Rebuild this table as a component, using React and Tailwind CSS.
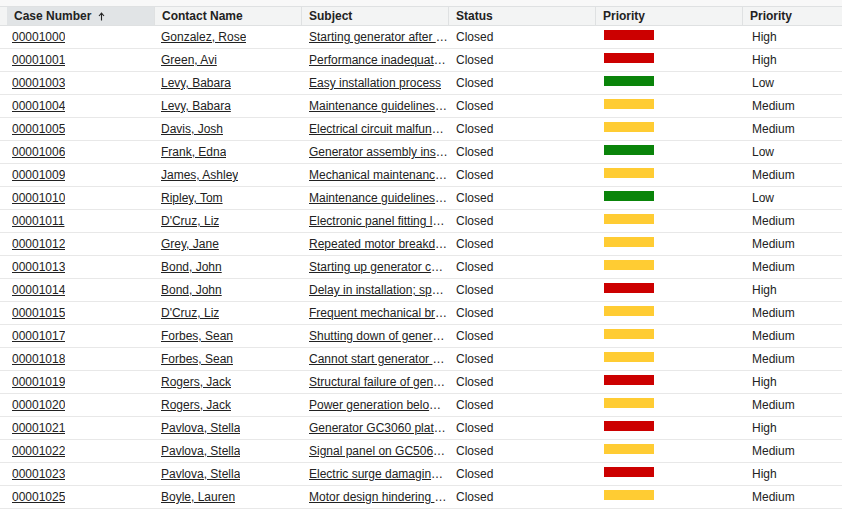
import React from "react";

const rows = [
  ["00001000", "Gonzalez, Rose", "Starting generator after electrical failure", "High"],
  ["00001001", "Green, Avi", "Performance inadequate for second consecutive week", "High"],
  ["00001003", "Levy, Babara", "Easy installation process", "Low"],
  ["00001004", "Levy, Babara", "Maintenance guidelines for generator unclear", "Medium"],
  ["00001005", "Davis, Josh", "Electrical circuit malfunctioning", "Medium"],
  ["00001006", "Frank, Edna", "Generator assembly instructions unclear", "Low"],
  ["00001009", "James, Ashley", "Mechanical maintenance schedule missing", "Medium"],
  ["00001010", "Ripley, Tom", "Maintenance guidelines for generator unclear", "Low"],
  ["00001011", "D'Cruz, Liz", "Electronic panel fitting loose", "Medium"],
  ["00001012", "Grey, Jane", "Repeated motor breakdowns", "Medium"],
  ["00001013", "Bond, John", "Starting up generator causes noise", "Medium"],
  ["00001014", "Bond, John", "Delay in installation; spare parts unavailable", "High"],
  ["00001015", "D'Cruz, Liz", "Frequent mechanical breakdown", "Medium"],
  ["00001017", "Forbes, Sean", "Shutting down of generator", "Medium"],
  ["00001018", "Forbes, Sean", "Cannot start generator after restart", "Medium"],
  ["00001019", "Rogers, Jack", "Structural failure of generator base", "High"],
  ["00001020", "Rogers, Jack", "Power generation below stated level", "Medium"],
  ["00001021", "Pavlova, Stella", "Generator GC3060 platform structure cracking", "High"],
  ["00001022", "Pavlova, Stella", "Signal panel on GC5060 blinks", "Medium"],
  ["00001023", "Pavlova, Stella", "Electric surge damaging equipment", "High"],
  ["00001025", "Boyle, Lauren", "Motor design hindering performance", "Medium"],
];

const barColor = {
  High: "bg-[#cc0000]",
  Medium: "bg-[#ffcc33]",
  Low: "bg-[#0a840a]",
};

const cols = "grid grid-cols-[7px_148px_147px_147px_147px_147px_1fr]";

function HeaderCell({ children, sorted, last }) {
  return (
    <div
      className={`flex items-center pl-[7px] font-bold ${sorted ? "bg-[#e1e4e6]" : ""} ${
        last ? "" : "border-r border-[#dfe1e2]"
      }`}
    >
      {children}
    </div>
  );
}

export default function App() {
  return (
    <div className="w-[842px] h-[515px] bg-white text-[12px] text-[#222] overflow-hidden" style={{ fontFamily: '"Liberation Sans", Arial, sans-serif' }}>
      <div className="h-[6px] bg-[#f8f8f8]" />
      <div className={`${cols} h-[20px] bg-[#f3f4f4] border-y border-[#dfe1e2]`}>
        <div />
        <HeaderCell sorted>
          Case Number
          <svg width="7" height="9" viewBox="0 0 7 9" className="ml-[7px]">
            <path d="M3.5 1.5V8.5M1 4L3.5 1.2L6 4" stroke="#222" strokeWidth="1.1" fill="none" />
          </svg>
        </HeaderCell>
        <HeaderCell>Contact Name</HeaderCell>
        <HeaderCell>Subject</HeaderCell>
        <HeaderCell>Status</HeaderCell>
        <HeaderCell>Priority</HeaderCell>
        <HeaderCell last>Priority</HeaderCell>
      </div>
      {rows.map(([num, name, subj, pri]) => (
        <div key={num} className={`${cols} h-[23px] border-b border-[#e8e8e8]`}>
          <div />
          <div className="flex items-center pl-[5px] min-w-0">
            <span className="underline truncate">{num}</span>
          </div>
          <div className="flex items-center pl-[6px] min-w-0">
            <span className="underline truncate">{name}</span>
          </div>
          <div className="flex items-center pl-[7px] pr-[1px] min-w-0">
            <span className="underline truncate">{subj}</span>
          </div>
          <div className="flex items-center pl-[7px]">Closed</div>
          <div className="flex items-center pl-[8px]">
            <div className={`w-[50px] h-[10px] mb-1 ${barColor[pri]}`} />
          </div>
          <div className="flex items-center pl-[9px]">{pri}</div>
        </div>
      ))}
    </div>
  );
}
